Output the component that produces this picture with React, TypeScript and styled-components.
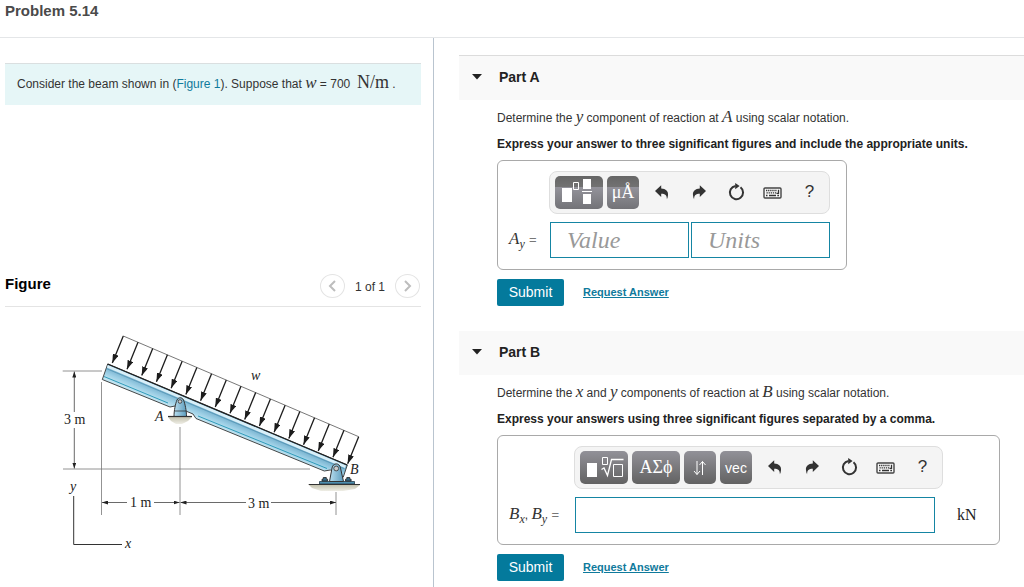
import React from "react";
import styled, { createGlobalStyle, css } from "styled-components";

const sans = `"Liberation Sans", Arial, sans-serif`;
const serif = `"Liberation Serif", "Times New Roman", serif`;

const GlobalStyle = createGlobalStyle`
  *, *::before, *::after { box-sizing: border-box; }
  body { margin: 0; background: #fff; color: #333; font: 12px/20px ${sans}; }
  h1, h2, h3, p { margin: 0; }
  button, input { font-family: inherit; }
`;

const Page = styled.div`
  display: flex;
  flex-direction: column;
  min-height: 100vh;
`;

const PageHeader = styled.header`
  padding: 0 5px 16px;
  border-bottom: 1px solid #e4e6e8;
`;

const Title = styled.h1`
  font-size: 15px;
  line-height: 21px;
  color: #4a4a4a;
`;

const Columns = styled.main`
  flex: 1;
  display: grid;
  grid-template-columns: minmax(0, 434fr) minmax(0, 590fr);
`;

const ProblemColumn = styled.section`
  padding: 25px 12px 0 5px;
  border-right: 1px solid #b9c4cf;
`;

const AnswerColumn = styled.section`
  padding: 17px 0 0 25px;
`;

const Statement = styled.p`
  padding: 7px 12px 8px;
  border-top: 1px solid #dadfe0;
  background: #e6f6f7;
  line-height: 26px;
`;

const TextLink = styled.a`
  color: #0f7a9c;
  text-decoration: none;
`;

const Math = styled.span<{ $size?: number; $upright?: boolean }>`
  font-family: ${serif};
  font-size: ${(p) => p.$size ?? 17}px;
  font-style: ${(p) => (p.$upright ? "normal" : "italic")};
  line-height: 1;
`;

const Sub = styled.sub`
  font-size: 12px;
  line-height: 1;
  vertical-align: -4px;
`;

const FigureHead = styled.div`
  display: flex;
  justify-content: space-between;
  align-items: flex-start;
  margin-top: 169px;
  padding-bottom: 8px;
  border-bottom: 1px solid #e4e4e4;
`;

const FigureTitle = styled.h2`
  font-size: 15px;
  line-height: 20px;
  color: #000;
`;

const Pager = styled.nav`
  display: flex;
  align-items: center;
  gap: 10px;
  padding-right: 1px;
`;

const PagerLabel = styled.span`
  padding-top: 2px;
  line-height: 22px;
`;

const PagerButton = styled.button`
  display: grid;
  place-items: center;
  width: 25px;
  height: 24px;
  padding: 0;
  border: 1px solid #e4e4e4;
  border-radius: 50%;
  background: #fff;
`;

const Drawing = styled.svg`
  display: block;
  width: 100%;
  height: auto;
  font-family: ${serif};
  font-size: 14px;
`;

const PartSection = styled.section`
  margin-bottom: 25px;
`;

const PartHeader = styled.h2<{ $ruled?: boolean }>`
  background: #f9f9f9;
  ${(p) => p.$ruled && css`border-top: 1px solid #dcdcdc;`}
`;

const PartToggle = styled.button`
  display: flex;
  align-items: center;
  gap: 17px;
  width: 100%;
  height: 44px;
  padding: 0 13px 2px;
  border: 0;
  background: none;
  color: #222;
  font-size: 14px;
  font-weight: bold;
`;

const PartBody = styled.div`
  padding: 5px 12px 0 38px;
`;

const Prompt = styled.p`
  line-height: 26px;
`;

const Instruction = styled.p`
  line-height: 26px;
  font-weight: bold;
  color: #222;
`;

const AnswerBox = styled.div<{ $label: number; $unit?: boolean }>`
  display: grid;
  grid-template-columns: ${(p) => p.$label}px auto ${(p) => (p.$unit ? "40px" : "")};
  row-gap: 8px;
  align-items: center;
  width: fit-content;
  margin-top: 3px;
  padding: 10px 16px 11px 11px;
  border: 1px solid #a9a9a9;
  border-radius: 6px;
`;

const Toolbar = styled.div`
  grid-column: 2;
  display: flex;
  gap: 4px;
  height: 43px;
  padding: 4px 1px 4px 5px;
  border: 1px solid #dedede;
  border-radius: 8px;
  background: #f4f4f4;
`;

const PaletteButton = styled.button<{ $wide?: boolean; $banded?: boolean; $font?: string; $size?: number }>`
  display: grid;
  place-items: center;
  width: ${(p) => (p.$wide ? 48 : 32)}px;
  height: 33px;
  padding: 0;
  border: 0;
  border-radius: 5px;
  color: #fff;
  font-family: ${(p) => p.$font ?? sans};
  font-size: ${(p) => p.$size ?? 14}px;
  background: ${(p) =>
    p.$banded
      ? "linear-gradient(#666 0, #727272 11px, #94939b 11px, #737377 100%)"
      : "linear-gradient(#929198, #626262)"};
`;

const IconGroup = styled.div`
  display: flex;
`;

const IconButton = styled.button`
  display: grid;
  place-items: center;
  width: 37px;
  height: 32px;
  padding: 0;
  border: 0;
  background: none;
  color: #333;
  font-size: 17px;
`;

const FieldLabel = styled.label`
  grid-column: 1;
  color: #333;
  white-space: nowrap;
`;

const Equals = styled.span`
  padding-left: 1px;
  font-size: 13px;
  color: #777;
`;

const Fields = styled.div<{ $inset?: boolean }>`
  display: flex;
  gap: 2px;
  margin-left: 1px;
  margin-right: ${(p) => (p.$inset ? 8 : 0)}px;
`;

const Field = styled.input`
  flex: 1;
  width: 0;
  min-width: 0;
  height: 36px;
  padding: 0 16px;
  border: 1px solid #1585a3;
  border-radius: 0;
  background: #fff;
  font: italic 24px ${serif};
  &::placeholder { color: #999; opacity: 1; }
`;

const Unit = styled.span`
  padding-left: 14px;
  font-family: ${serif};
  font-size: 16px;
  color: #222;
`;

const Actions = styled.div`
  display: flex;
  align-items: center;
  gap: 19px;
  margin-top: 9px;
`;

const SubmitButton = styled.button`
  width: 67px;
  height: 27px;
  padding: 0 0 2px;
  border: 0;
  border-radius: 2px;
  background: #047a9c;
  color: #fff;
  font-size: 14px;
`;

const RequestLink = styled.a`
  padding-bottom: 2px;
  color: #0f7a9c;
  font-size: 11px;
  font-weight: bold;
`;

const Chevron = ({ flip }: { flip?: boolean }) => (
  <svg width="8" height="12" viewBox="0 0 8 12" fill="none" stroke="#bdbdbd" strokeWidth="2">
    <path d={flip ? "M1 1l5 5-5 5" : "M7 1L2 6l5 5"} />
  </svg>
);

const Caret = () => (
  <svg width="10" height="6" viewBox="0 0 10 6">
    <path d="M0 0h10L5 5.6z" fill="#222" />
  </svg>
);

const TemplateIcon = () => (
  <svg width="48" height="33" viewBox="0 0 48 33">
    <path d="M7 12h10v14H7zM28 3h8v10h-8zM28 18h8v10h-8zM27 15h10v1H27z" fill="#fff" />
    <path d="M18.500 6.500h5v7h-5z" fill="none" stroke="#fff" />
  </svg>
);

const RootIcon = () => (
  <svg width="48" height="33" viewBox="0 0 48 33">
    <path d="M7 12h10v14H7z" fill="#fff" />
    <path d="M22.500 6.500h5v7h-5zM33.500 13.500h9v12h-9z" fill="none" stroke="#fff" />
    <path d="M21.500 18.500L24 17l3.500 7.500L31.500 8.500h12" fill="none" stroke="#fff" strokeWidth="1.300" />
  </svg>
);

const SwapIcon = () => (
  <svg width="14" height="16" viewBox="0 0 14 16" fill="none" stroke="#fff">
    <path d="M4 1v13.500M1 11l3 3.500L7 11M9.500 15V1.500M6.500 5l3-3.500 3 3.500" />
  </svg>
);

const TurnIcon = ({ redo }: { redo?: boolean }) => (
  <svg width="14" height="15" viewBox="0 0 14 15" fill="#333">
    <path
      transform={redo ? "matrix(-1 0 0 1 14 0)" : undefined}
      d="M0 6L6.200.3v3.200C10.800 3.600 13.600 6.300 13 10.200c-.1 1.500-.5 2.800-1.100 4.100.1-3.800-1.700-5.500-5.700-5.500V12z"
    />
  </svg>
);

const ResetIcon = () => (
  <svg width="18" height="18" viewBox="0 0 18 18">
    <path d="M13.500 4.300A6.600 6.600 0 1 1 8.500 3" fill="none" stroke="#333" strokeWidth="2" />
    <path d="M8.200 0l4.400 3-4.400 3.200z" fill="#333" />
  </svg>
);

const KeyboardIcon = () => (
  <svg width="19" height="14" viewBox="0 0 19 14">
    <rect x="1" y="3" width="17" height="10" rx="1" fill="#f8f8f8" stroke="#444" strokeWidth="1.400" />
    <path d="M3 5.500h11M3.500 7.800h10" stroke="#333" strokeWidth="1.300" strokeDasharray="1.300 .8" />
    <path d="M3 10.500h1.500M6 10.500h7M14.300 10.500H16M15.500 4.800v3.500h-2" fill="none" stroke="#333" strokeWidth="1.300" />
  </svg>
);

const EditingIcons = () => (
  <IconGroup>
    <IconButton aria-label="Undo"><TurnIcon /></IconButton>
    <IconButton aria-label="Redo"><TurnIcon redo /></IconButton>
    <IconButton aria-label="Reset"><ResetIcon /></IconButton>
    <IconButton aria-label="Keyboard shortcuts"><KeyboardIcon /></IconButton>
    <IconButton aria-label="Help">?</IconButton>
  </IconGroup>
);

const loads = Array.from({ length: 17 }, (_, i) => ({
  x: 123.3 + i * 14.71,
  y: 336 + i * 6.29,
}));

const BeamDrawing = () => (
  <Drawing viewBox="5 307 416 253" role="img" aria-label="Inclined beam with a distributed load, supported at A and B">
    <defs>
      <linearGradient id="beam" gradientUnits="userSpaceOnUse" x1="224" y1="413" x2="218" y2="427">
        <stop offset="0" stopColor="#5f9fbf" />
        <stop offset="0.6" stopColor="#9acde4" />
        <stop offset="1" stopColor="#c2e5f2" />
      </linearGradient>
      <linearGradient id="pin" x1="0" x2="1">
        <stop offset="0" stopColor="#b9deee" />
        <stop offset="1" stopColor="#5c9cbd" />
      </linearGradient>
      <linearGradient id="ground" x1="0" y1="0" x2="0" y2="1">
        <stop offset="0" stopColor="#c4c2ae" />
        <stop offset="1" stopColor="#efeee6" />
      </linearGradient>
      <marker id="dim" viewBox="0 0 6 4" refX="6" refY="2" markerWidth="6" markerHeight="4" markerUnits="userSpaceOnUse" orient="auto-start-reverse">
        <path d="M0 0l6 2-6 2z" fill="#222" />
      </marker>
      <marker id="load" viewBox="0 0 9 6" refX="9" refY="3" markerWidth="9" markerHeight="6" markerUnits="userSpaceOnUse" orient="auto">
        <path d="M0 0l9 3-9 3z" fill="#1c1c1c" />
      </marker>
    </defs>

    <g stroke="#777" fill="none" strokeWidth="0.800">
      <path d="M62.700 371H102M63 469h247M101.500 382v133M180 427v88M336 492v23" />
    </g>
    <g stroke="#444" fill="none" strokeWidth="0.800">
      <path d="M74.300 412v-40.500" markerEnd="url(#dim)" />
      <path d="M74.300 428v40.500" markerEnd="url(#dim)" />
      <path d="M127 502.500h-25" markerEnd="url(#dim)" />
      <path d="M154 502.500h25.500" markerEnd="url(#dim)" />
      <path d="M246 502.500h-65.500" markerEnd="url(#dim)" />
      <path d="M271 502.500h65" markerEnd="url(#dim)" />
    </g>
    <path d="M73.700 496v48.500H122" fill="none" stroke="#333" />

    <path d="M168 417h24l-4 4-6 3h-6l-5-3z" fill="url(#ground)" />
    <path d="M309 485h51l-5 4-12 2h-22l-9-3z" fill="url(#ground)" />

    <path
      d="M107.700 364L347.300 465l-4 12-13-7-6 1L196 418.500l-3-4.500-12-5-6-3-5 1-67.700-27.500z"
      fill="url(#beam)"
      stroke="#333"
      strokeWidth="0.900"
    />
    <path d="M107.300 366.300L345.500 466.700" stroke="#d9eff8" strokeWidth="2.800" />
    <path d="M106.500 368.600L344 468.600" stroke="#4b8cae" strokeWidth="0.700" />
    <path d="M104 376.500L168 403M198 416l129 52.500" stroke="#2094b4" strokeWidth="0.900" />
    <path d="M107.700 364L347.300 465" stroke="#222" strokeWidth="1.200" />

    <path d="M123.300 336L358.700 436.700" stroke="#555" strokeWidth="0.800" />
    {loads.map((p) => (
      <path key={p.x} d={`M${p.x} ${p.y}l-11 27`} stroke="#1c1c1c" strokeWidth="1.300" markerEnd="url(#load)" />
    ))}

    <path d="M174 416.500c0-6 1.500-13 3-16.500 1.500-3 5-3 6.500 0 1.500 3.500 3 10.500 3 16.500z" fill="url(#pin)" stroke="#333" />
    <path d="M174.500 411h11.500" stroke="#333" strokeWidth="0.800" />
    <circle cx="180" cy="401.500" r="1.800" fill="#ccc" stroke="#333" strokeWidth="0.800" />
    <path d="M168 416.500h24" stroke="#333" strokeWidth="1.200" />

    <path d="M319.500 484v-2.500h35v2.500z" fill="#4d8eae" stroke="#263b46" strokeWidth="0.800" />
    <path d="M322 481v-1.800h1.300v-1.700h3v1.700h1.300v1.800zM345.500 481v-1.800h1.300v-1.700h3v1.700h1.300v1.800z" fill="#356b88" stroke="#222" strokeWidth="0.800" />
    <path d="M329.500 481.500L332 468c1-5.500 7.500-5.500 8.500 0l3 13.500z" fill="url(#pin)" stroke="#333" />
    <circle cx="336.200" cy="468.500" r="2.400" fill="#ccc" stroke="#333" strokeWidth="0.800" />
    <path d="M308.700 484.500H360" stroke="#333" strokeWidth="1.200" />

    <g fill="#222">
      <text x="64" y="424">3 m</text>
      <text x="130" y="507">1 m</text>
      <text x="248" y="508">3 m</text>
      <g fontStyle="italic">
        <text x="155" y="421">A</text>
        <text x="350" y="474">B</text>
        <text x="251" y="380">w</text>
        <text x="70" y="491">y</text>
        <text x="125" y="548">x</text>
      </g>
    </g>
  </Drawing>
);

interface PartProps {
  title: string;
  ruled?: boolean;
  prompt: React.ReactNode;
  instruction: string;
  children: React.ReactNode;
}

const Part = ({ title, ruled, prompt, instruction, children }: PartProps) => (
  <PartSection>
    <PartHeader $ruled={ruled}>
      <PartToggle aria-expanded="true"><Caret />{title}</PartToggle>
    </PartHeader>
    <PartBody>
      <Prompt>{prompt}</Prompt>
      <Instruction>{instruction}</Instruction>
      {children}
      <Actions>
        <SubmitButton type="submit">Submit</SubmitButton>
        <RequestLink href="#request">Request Answer</RequestLink>
      </Actions>
    </PartBody>
  </PartSection>
);

export default function App() {
  return (
    <Page>
      <GlobalStyle />
      <PageHeader><Title>Problem 5.14</Title></PageHeader>
      <Columns>
        <ProblemColumn>
          <Statement>
            Consider the beam shown in (<TextLink href="#figure">Figure 1</TextLink>). Suppose that{" "}
            <Math>w</Math> = 700 &nbsp;<Math $size={18} $upright>N/m</Math> .
          </Statement>
          <FigureHead id="figure">
            <FigureTitle>Figure</FigureTitle>
            <Pager aria-label="Figures">
              <PagerButton aria-label="Previous figure"><Chevron /></PagerButton>
              <PagerLabel>1 of 1</PagerLabel>
              <PagerButton aria-label="Next figure"><Chevron flip /></PagerButton>
            </Pager>
          </FigureHead>
          <BeamDrawing />
        </ProblemColumn>
        <AnswerColumn>
          <Part
            title="Part A"
            ruled
            prompt={<>Determine the <Math>y</Math> component of reaction at <Math>A</Math> using scalar notation.</>}
            instruction="Express your answer to three significant figures and include the appropriate units."
          >
            <AnswerBox $label={40}>
              <Toolbar>
                <PaletteButton $wide $banded aria-label="Templates"><TemplateIcon /></PaletteButton>
                <PaletteButton $banded $font={serif} $size={18}>μÅ</PaletteButton>
                <EditingIcons />
              </Toolbar>
              <FieldLabel htmlFor="value-a"><Math>A<Sub>y</Sub></Math> <Equals>=</Equals></FieldLabel>
              <Fields>
                <Field id="value-a" placeholder="Value" />
                <Field aria-label="Units" placeholder="Units" />
              </Fields>
            </AnswerBox>
          </Part>
          <Part
            title="Part B"
            prompt={<>Determine the <Math>x</Math> and <Math>y</Math> components of reaction at <Math>B</Math> using scalar notation.</>}
            instruction="Express your answers using three significant figures separated by a comma."
          >
            <AnswerBox $label={65} $unit>
              <Toolbar>
                <PaletteButton $wide aria-label="Templates"><RootIcon /></PaletteButton>
                <PaletteButton $wide $font={serif} $size={18}>ΑΣϕ</PaletteButton>
                <PaletteButton aria-label="Arrows"><SwapIcon /></PaletteButton>
                <PaletteButton>vec</PaletteButton>
                <EditingIcons />
              </Toolbar>
              <FieldLabel htmlFor="value-b">
                <Math>B<Sub>x</Sub></Math>, <Math>B<Sub>y</Sub></Math> <Equals>=</Equals>
              </FieldLabel>
              <Fields $inset><Field id="value-b" /></Fields>
              <Unit>kN</Unit>
            </AnswerBox>
          </Part>
        </AnswerColumn>
      </Columns>
    </Page>
  );
}
